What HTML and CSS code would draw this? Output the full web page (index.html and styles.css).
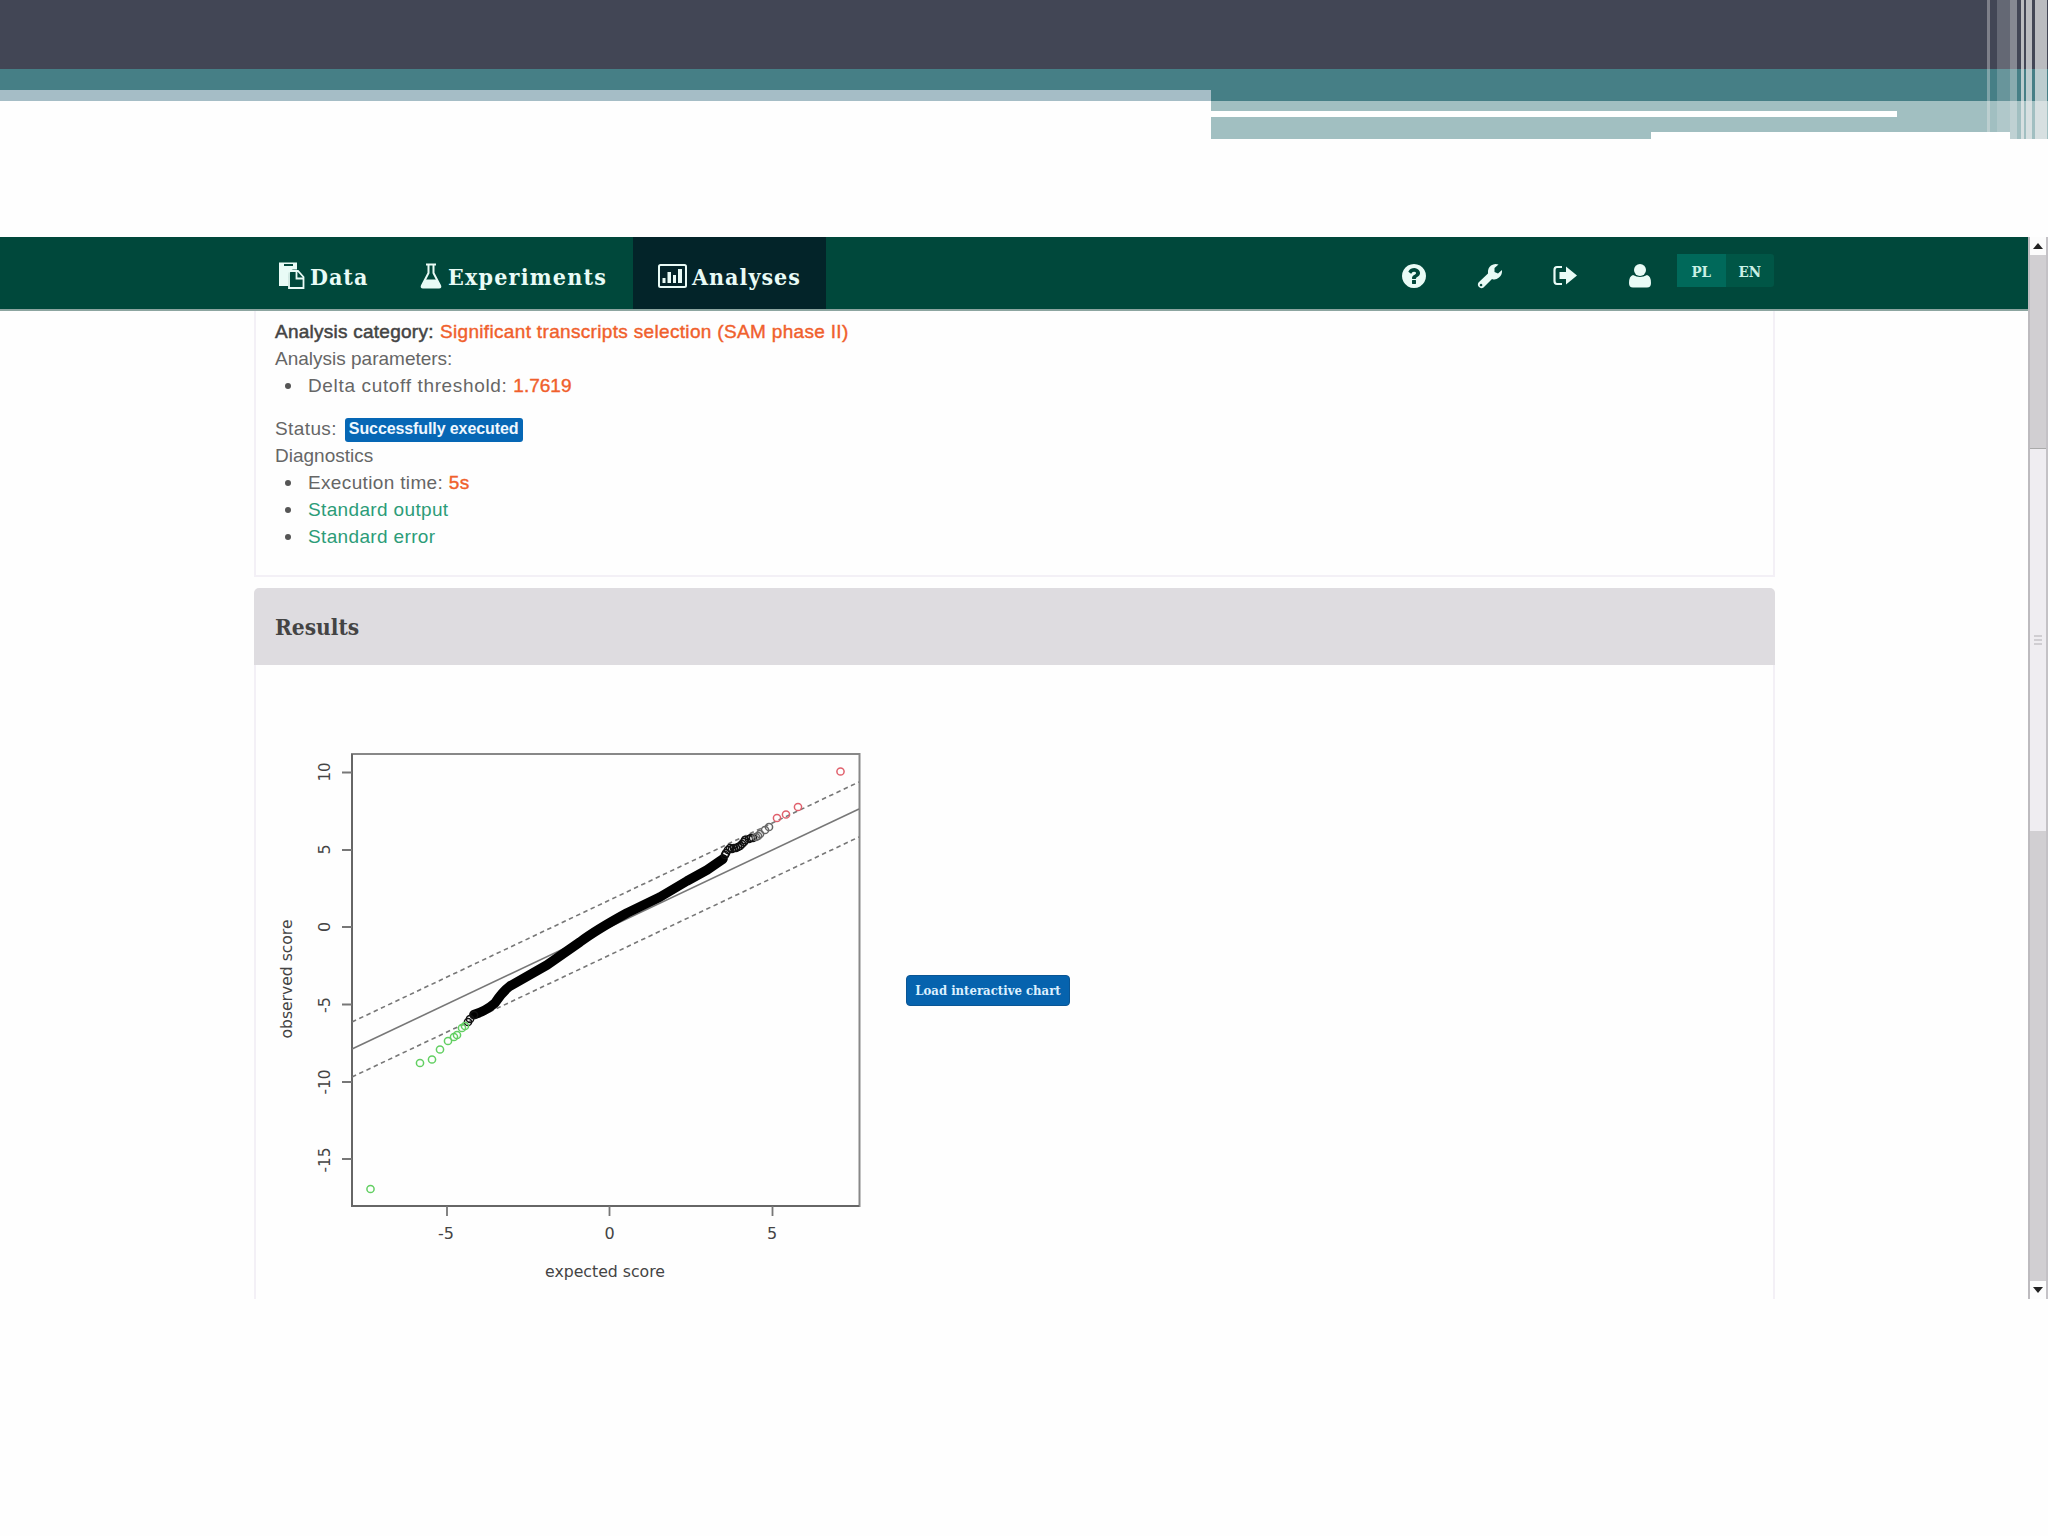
FILE: index.html
```html
<!DOCTYPE html>
<html lang="en">
<head>
    <meta charset="UTF-8">
    <meta name="viewport" content="width=device-width, initial-scale=1.0">
    <title>Analyses</title>
    <link rel="stylesheet" href="styles.css">
</head>
<body>
    <svg class="ornament" viewBox="0 0 2048 140" shape-rendering="crispEdges">
        <rect width="2048" height="69" fill="#424655"/>
        <rect y="69" width="2048" height="32" fill="#467f86"/>
        <rect y="90" width="1211" height="11" fill="#a5bdc6"/>
        <rect x="1211" y="101" width="837" height="38" fill="#a1bfc1"/>
        <rect x="1211" y="111" width="686" height="6" fill="#fff"/>
        <g fill="#eee">
            <rect x="1987" width="3" height="139" fill-opacity=".35"/>
            <rect x="1997" width="13" height="139" fill-opacity=".2"/>
            <rect x="2010" width="7" height="139" fill-opacity=".4"/>
            <rect x="2021" width="3" height="139" fill-opacity=".7"/>
            <rect x="2026" width="6" height="139" fill-opacity=".7"/>
            <rect x="2035" width="12" height="139" fill-opacity=".7"/>
        </g>
        <rect x="1651" y="132" width="359" height="8" fill="#fff"/>
    </svg>

    <div class="browser">
        <div class="page">
            <nav class="navbar">
                <a class="nav-item data">
                    <svg width="26" height="30" viewBox="0 0 26 30">
                        <path d="M0 1.500h18v7h-4q-5 1-5 5.500v11H0z" fill="#e9fbf6"/>
                        <path d="M5 4h9" stroke="#00483b" stroke-width="2"/>
                        <path d="M11 10h8l5.500 6v11H10V11z" fill="#00483b" stroke="#e9fbf6" stroke-width="1.800"/>
                        <path d="M17.500 10v7.500h7" fill="none" stroke="#e9fbf6" stroke-width="1.800"/>
                    </svg>
                    <span>Data</span>
                </a>
                <a class="nav-item experiments">
                    <svg width="23" height="26" viewBox="0 0 23 26">
                        <path d="M6 1.500h10M8.500 2v8L2 22.500q-1 2 1 2h16q2 0 1-2L13.500 10V2" fill="none" stroke="#e9fbf6" stroke-width="2"/>
                        <path d="M5.500 16.500h11.500l4 8H1.500z" fill="#e9fbf6"/>
                    </svg>
                    <span>Experiments</span>
                </a>
                <a class="nav-item analyses active">
                    <svg width="29" height="24" viewBox="0 0 29 24">
                        <rect x="1" y="1" width="27" height="22" rx="1.500" fill="none" stroke="#e9fbf6" stroke-width="2"/>
                        <path d="M4.500 14h3v5h-3zM9.500 8h3.500v11H9.500zM15 11h3v8h-3zM20 5h4v14h-4z" fill="#e9fbf6"/>
                    </svg>
                    <span>Analyses</span>
                </a>
                <div class="tools">
                    <svg width="24" height="24" viewBox="128 128 1536 1536" fill="#e9fbf6">
                        <path d="M1024 1376v-192q0-14-9-23t-23-9H800q-14 0-23 9t-9 23v192q0 14 9 23t23 9h192q14 0 23-9t9-23zm256-672q0-88-55.500-163T1086 425t-170-41q-243 0-371 213-15 24 8 42l132 100q7 6 19 6 16 0 25-12 53-68 86-92 34-24 86-24 48 0 85.500 26t37.500 59q0 38-20 61t-68 45q-63 28-115.500 86.500T768 1020v36q0 14 9 23t23 9h192q14 0 23-9t9-23q0-19 21.500-49.500T1100 957q32-18 49-28.500t46-35 44.500-48 28-60.500 12.500-81zm384 192q0 209-103 385.500T1281.500 1561 896 1664t-385.500-103T231 1281.500 128 896t103-385.500T510.500 231 896 128t385.500 103T1561 510.500 1664 896z"/>
                    </svg>
                    <svg width="26" height="26" viewBox="0 0 26 26">
                        <path fill="#e9fbf6" fill-rule="evenodd" d="M1.500 19.500L11 10.500Q10.500 5 14 2.500T21.500 1.500L17.500 5v4l3.500 1.500L25 7q.5 4.500-3 7.500t-7 1.500L6.500 24.500Q4 26 2 24T1.500 19.500zM4 20.700a1.300 1.300 0 1 0 .1 0z"/>
                    </svg>
                    <svg width="25" height="22" viewBox="0 0 25 22">
                        <path d="M9 2H4Q1.500 2 1.500 5v11q0 3 2.500 3h5" fill="none" stroke="#e9fbf6" stroke-width="2.200"/>
                        <path d="M6.500 7H13V1.500L24 10.500 13 19.500V14H6.500z" fill="#e9fbf6"/>
                    </svg>
                    <svg width="22" height="25" viewBox="0 0 22 25" fill="#e9fbf6">
                        <circle cx="11" cy="7" r="6"/>
                        <path d="M4 12q7 4 14 0 4 1 4 8 0 4.500-4 4.500H4q-4 0-4-4.500 0-7 4-8z"/>
                    </svg>
                </div>
                <div class="lang">
                    <span class="current">PL</span><span>EN</span>
                </div>
            </nav>

            <div class="content">
                <div class="panel details">
                    <p><span class="strong">Analysis category:</span> <span class="value selection">Significant transcripts selection (SAM phase II)</span></p>
                    <p>Analysis parameters:</p>
                    <ul>
                        <li class="delta">Delta cutoff threshold: <span class="value">1.7619</span></li>
                    </ul>
                    <p class="status">Status: <span class="badge">Successfully executed</span></p>
                    <p>Diagnostics</p>
                    <ul>
                        <li>Execution time: <span class="value">5s</span></li>
                        <li><a>Standard output</a></li>
                        <li><a>Standard error</a></li>
                    </ul>
                </div>

                <h3 class="panel-heading">Results</h3>
                <div class="panel results">
                    <svg class="chart" width="630" height="634" viewBox="256 665 630 634">
                        <rect x="352" y="754" width="507.500" height="452" fill="none" stroke="#888" stroke-width="2"/>
                        <path d="M352 754V1206H859" fill="none" stroke="#666" stroke-width="2"/>
                        <path d="M342 772.500h10M342 850h10M342 927h10M342 1004.500h10M342 1082h10M342 1159h10M447 1206v10M609.500 1206v10M772.500 1206v10" stroke="#777" stroke-width="1.800"/>
                        <path d="M352 1049L859 809" stroke="#777" stroke-width="1.600"/>
                        <path d="M352 1022L859 782M352 1077L859 837" stroke="#777" stroke-width="1.600" stroke-dasharray="4.500 3.500"/>
                        <path d="M474 1014.500Q486 1011 495 1003Q502 992 510 986L547 965L580 942Q596 930 627 913L660 897L687 881L707 870L723 859" fill="none" stroke="#000" stroke-width="9.500" stroke-linejoin="round" stroke-linecap="round"/>
                        <g id="points" fill="none" stroke-width="1.500"></g>
                        <g class="tick">
                            <text x="446" y="1239">-5</text>
                            <text x="609.500" y="1239">0</text>
                            <text x="772" y="1239">5</text>
                            <text transform="translate(330 772) rotate(-90)" textLength="19" lengthAdjust="spacingAndGlyphs">10</text>
                            <text transform="translate(330 849.500) rotate(-90)">5</text>
                            <text transform="translate(330 927) rotate(-90)">0</text>
                            <text transform="translate(330 1005) rotate(-90)">-5</text>
                            <text transform="translate(330 1082) rotate(-90)" textLength="25" lengthAdjust="spacingAndGlyphs">-10</text>
                            <text transform="translate(330 1160) rotate(-90)" textLength="25" lengthAdjust="spacingAndGlyphs">-15</text>
                            <text x="605" y="1277" textLength="120" lengthAdjust="spacingAndGlyphs">expected score</text>
                            <text transform="translate(292 979) rotate(-90)" textLength="119" lengthAdjust="spacingAndGlyphs">observed score</text>
                        </g>
                    </svg>
                    <button class="load" type="button">Load interactive chart</button>
                </div>
            </div>
        </div>

        <div class="scrollbar">
            <div class="arrow"><svg width="10" height="6"><path d="M0 6L5 0l5 6z" fill="#222"/></svg></div>
            <div class="track">
                <div class="thumb"><i></i><i></i><i></i></div>
            </div>
            <div class="arrow"><svg width="10" height="6"><path d="M0 0h10L5 6z" fill="#222"/></svg></div>
        </div>
    </div>

    <script>
        // single observations outside the dense part of the plot
        const groups = {
            "#111": [[468, 1022], [470, 1019], [474, 1015], [725, 855], [726, 853], [728, 850], [730, 848], [732, 849], [734, 848], [736, 848], [738, 847], [740, 846], [742, 844], [744, 842], [745, 840], [749, 839], [751, 838], [753, 838]],
            "#666": [[756, 837], [758, 836], [760, 834], [765, 830], [769, 827]],
            "#e0606c": [[777, 818], [786, 814.5], [798, 807], [840.5, 771.5]],
            "#62cf62": [[370.5, 1189], [420, 1063], [432, 1059.5], [440, 1049.5], [448, 1041], [454, 1037], [457, 1035], [462, 1028], [465, 1026]]
        };
        const points = document.getElementById("points");
        for (const color in groups) {
            groups[color].forEach(([x, y]) => {
                const c = document.createElementNS("http://www.w3.org/2000/svg", "circle");
                c.setAttribute("cx", x);
                c.setAttribute("cy", y);
                c.setAttribute("r", 3.6);
                c.setAttribute("stroke", color);
                points.appendChild(c);
            });
        }
    </script>
</body>
</html>
```
FILE: styles.css
```css
* {
    box-sizing: border-box;
}
body {
    margin: 0;
    height: 1536px;
    overflow: hidden;
    background: #fefefe;
    color: #666;
    font-family: "Liberation Sans", Arial, sans-serif;
    font-size: 19px;
}
.ornament {
    display: block;
    width: 2048px;
    height: 140px;
}
.browser {
    display: flex;
    height: 1062px;
    margin-top: 97px;
}
.page {
    width: 2028px;
    overflow: hidden;
}
.navbar {
    display: flex;
    height: 74px;
    padding-left: 254px;
    background: #00483b;
    border-bottom: 2px solid #8ca5a0;
}
.nav-item {
    display: flex;
    align-items: center;
    padding: 6px 25px 0;
    color: #e9fbf6;
    font-family: "DejaVu Serif Condensed", "DejaVu Serif", serif;
    font-size: 23px;
    font-weight: bold;
    letter-spacing: 1px;
}
.nav-item svg {
    flex: none;
}
.nav-item span {
    margin-left: 5px;
    white-space: nowrap;
}
.data {
    width: 141px;
}
.experiments {
    width: 238px;
    letter-spacing: 1.2px;
}
.analyses {
    width: 193px;
}
.active {
    background: #032429;
}
.tools {
    display: flex;
    align-items: center;
    justify-content: space-between;
    width: 249px;
    margin-left: 576px;
    padding-top: 5px;
}
.lang {
    display: flex;
    width: 97px;
    height: 33px;
    margin: 17px 0 0 26px;
    background: #005646;
    border-radius: 3px;
    color: #c9f0e5;
    font: bold 15px/36px "DejaVu Serif Condensed", "DejaVu Serif", serif;
    text-align: center;
}
.lang span {
    flex: 1;
}
.lang .current {
    background: #00695a;
}
.content {
    width: 1521px;
    margin-left: 254px;
}
.panel {
    border: 2px solid #f3f0f6;
    border-top: 0;
}
.details {
    height: 266px;
    padding: 7px 19px;
    line-height: 27.2px;
    white-space: nowrap;
}
.details p {
    margin: 0;
}
.details ul {
    margin: 0;
    padding: 0;
    list-style: none;
}
.details li {
    display: flex;
    align-items: center;
    height: 27.2px;
    letter-spacing: 0.35px;
    white-space: pre;
}
.details .delta {
    letter-spacing: 0.65px;
}
.delta .value {
    letter-spacing: 0;
}
.details li::before {
    content: "";
    width: 6px;
    height: 6px;
    margin: 0 17px 0 10px;
    background: #555;
    border-radius: 50%;
}
.details .status {
    height: 27.2px;
    margin-top: 15px;
    letter-spacing: 0.4px;
}
.strong {
    color: #444;
    letter-spacing: 0.25px;
    -webkit-text-stroke: 0.5px #444;
}
.value {
    color: #f0602c;
    -webkit-text-stroke: 0.4px #f0602c;
}
.selection {
    margin-left: 1px;
    letter-spacing: 0.33px;
}
.details a {
    color: #2c9c78;
}
.badge {
    display: inline-block;
    width: 178px;
    height: 24px;
    margin-left: 2px;
    background: #0667b5;
    border-radius: 3px;
    color: #eef7ff;
    font-size: 16px;
    font-weight: bold;
    letter-spacing: -0.1px;
    line-height: 22px;
    text-align: center;
    vertical-align: 1px;
}
.panel-heading {
    height: 77px;
    margin: 11px 0 0;
    padding-left: 21px;
    background: #dedce0;
    border-radius: 5px 5px 0 0;
    color: #444;
    font: bold 22.5px/79px "DejaVu Serif Condensed", "DejaVu Serif", serif;
}
.results {
    display: flex;
    align-items: flex-start;
    height: 640px;
}
.chart {
    flex: none;
}
.tick {
    fill: #444;
    font-family: "DejaVu Sans", sans-serif;
    font-size: 16px;
    text-anchor: middle;
}
.load {
    width: 164px;
    height: 31px;
    margin: 310px 0 0 20px;
    padding: 0;
    background: #0663ae;
    border: 1px solid #0a5594;
    border-radius: 4px;
    color: #dcf0ff;
    font: bold 13px "DejaVu Serif Condensed", "DejaVu Serif", serif;
    white-space: nowrap;
}
.scrollbar {
    display: flex;
    flex-direction: column;
    width: 20px;
    border-left: 2px solid #bdbbbf;
    border-right: 2px solid #c4c2c6;
    background: #d1cfd2;
}
.arrow {
    display: flex;
    align-items: center;
    justify-content: center;
    height: 18px;
    background: #fcfcfc;
}
.track {
    flex: 1;
    padding-top: 193px;
}
.thumb {
    display: flex;
    flex-direction: column;
    align-items: center;
    justify-content: center;
    gap: 2px;
    height: 383px;
    background: #efedf1;
    border-top: 1px solid #aaa;
}
.thumb i {
    width: 8px;
    height: 2px;
    background: #d0ced2;
}
```
